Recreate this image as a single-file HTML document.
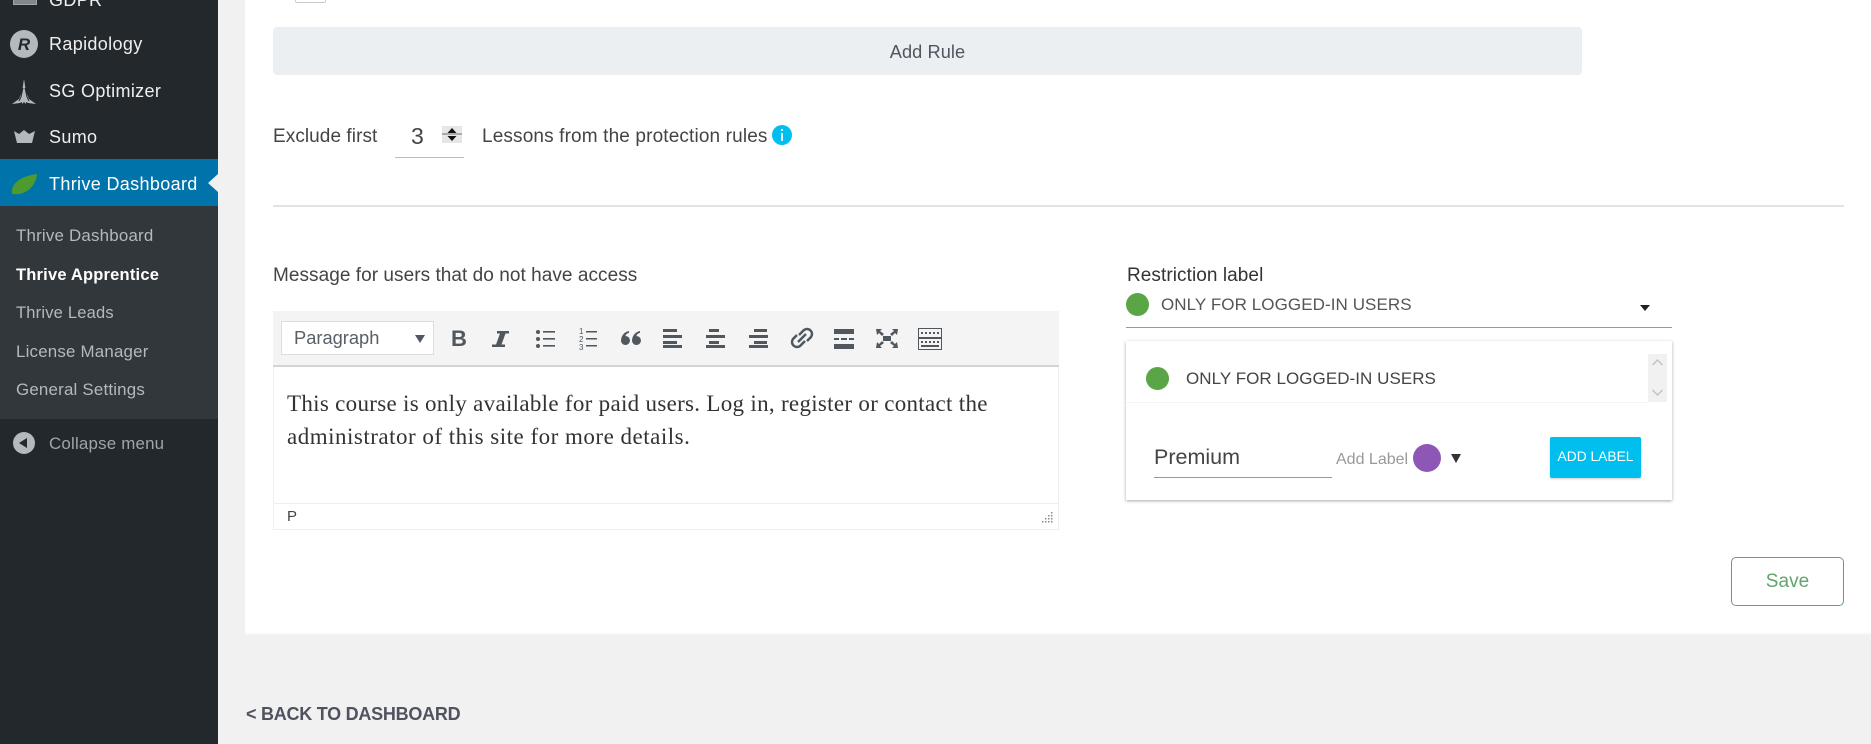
<!DOCTYPE html>
<html><head><meta charset="utf-8"><title>Thrive Apprentice</title>
<style>
html,body{margin:0;padding:0;width:1871px;height:744px;overflow:hidden;background:#f1f1f1}
body{position:relative;font-family:"Liberation Sans",sans-serif;color:#444}
.a,.t{position:absolute}
.t{white-space:nowrap;line-height:24px;height:24px}
.m{font-size:18px;color:#eee;left:49px;letter-spacing:.35px}
.s{font-size:16.9px;color:#b4b9be;left:16px;letter-spacing:.2px}
.c{font-size:19px;color:#444;letter-spacing:.07px}
.e{font-family:"Liberation Serif",serif;font-size:23px;color:#333;left:287px;letter-spacing:.3px}
.u{font-size:17px;letter-spacing:0}
svg{position:absolute;overflow:visible}
</style></head><body>
<div class="a" style="left:0;top:0;width:218px;height:744px;background:#23282d"></div>
<div class="a" style="left:0;top:159px;width:218px;height:47px;background:#0073aa"></div>
<div class="a" style="left:0;top:206px;width:218px;height:213px;background:#32373c"></div>
<div class="a" style="left:208px;top:174px;border:9px solid transparent;border-left:0;border-right:10px solid #f1f1f1"></div>

<div class="a" style="left:13px;top:-8px;width:22px;height:11px;border:1px solid #a0a5aa;background:#82878c"></div>
<div class="t m" style="top:-12px">GDPR</div>
<svg style="left:0;top:0" width="60" height="210" viewBox="0 0 60 210">
<circle cx="24" cy="44" r="14" fill="#b4b9be"/>
<text x="24" y="50" text-anchor="middle" font-family="Liberation Sans" font-style="italic" font-weight="bold" font-size="17" fill="#23282d">R</text>
<path d="M24 79l2 13 3 7 7 5-8-1-2-1 0 2-2-2-2 2 0-2-2 1-8 1 7-5 3-7z" fill="#b4b9be"/>
<path d="M23 88l-2 9-2 4M25 88l2 9 2 4" stroke="#23282d" stroke-width="1" fill="none"/>
<path d="M14 131l5 3 5-4 5 4 6-3-3 12H17z" fill="#b4b9be"/>
<path d="M12 194C10 183 22 176 37 174 36 186 26 196 12 194z" fill="#4f9a2f"/>
</svg>
<div class="t m" style="top:32px">Rapidology</div>
<div class="t m" style="top:79px">SG Optimizer</div>
<div class="t m" style="top:125px">Sumo</div>
<div class="t m" style="top:172px;color:#fff">Thrive Dashboard</div>
<div class="t s" style="top:224px">Thrive Dashboard</div>
<div class="t s" style="top:263px;color:#fff;font-weight:bold;font-size:16.500px">Thrive Apprentice</div>
<div class="t s" style="top:301px;font-size:16.500px">Thrive Leads</div>
<div class="t s" style="top:340px">License Manager</div>
<div class="t s" style="top:378px">General Settings</div>
<svg style="left:13px;top:432px" width="22" height="22"><circle cx="11" cy="11" r="11" fill="#b4b9be"/><path d="M6 11l8-5v10z" fill="#23282d"/></svg>
<div class="t s" style="top:432px;left:49px;color:#a0a5aa">Collapse menu</div>

<div class="a" style="left:245px;top:0;width:1626px;height:633px;background:#fff;border-bottom:2px solid #f6f6f6"></div>
<div class="a" style="left:295px;top:-6px;width:29px;height:7px;border:1px solid #ccc;border-radius:2px;background:#fff"></div>
<div class="a" style="left:273px;top:27px;width:1309px;height:48px;background:#ebeff2;border-radius:4px"></div>
<div class="t c" style="left:273px;width:1309px;text-align:center;top:40px;color:#50565f;font-size:18.200px">Add Rule</div>

<div class="t c" style="left:273px;top:125px">Exclude first</div>
<div class="t" style="left:411px;top:124px;font-size:23px;color:#444">3</div>
<div class="a" style="left:442px;top:126px;width:20px;height:17px;background:#e6e6e6"></div>
<svg style="left:442px;top:126px" width="20" height="17"><path d="M10 2l4.500 5h-9zM10 15l-4.500-5h9z" fill="#111"/><rect y="7" width="20" height="2" fill="#aaa"/></svg>
<div class="a" style="left:395px;top:157px;width:69px;height:1px;background:#bbb"></div>
<div class="t c" style="left:482px;top:125px;letter-spacing:.14px">Lessons from the protection rules</div>
<svg style="left:772px;top:125px" width="20" height="20"><circle cx="10" cy="10" r="10" fill="#00bfee"/><rect x="9" y="8" width="2" height="8" fill="#dff"/><rect x="9" y="4" width="2" height="2" fill="#dff"/></svg>
<div class="a" style="left:273px;top:205px;width:1571px;height:2px;background:#e2e2e2"></div>

<div class="t c" style="left:273px;top:264px;letter-spacing:.05px">Message for users that do not have access</div>
<div class="a" style="left:273px;top:311px;width:786px;height:219px;border:1px solid #eee;box-sizing:border-box;background:#fff"></div>
<div class="a" style="left:273px;top:311px;width:786px;height:54px;background:#f4f4f4;border-bottom:2px solid #d4d4d4"></div>
<div class="a" style="left:281px;top:321px;width:153px;height:34px;box-sizing:border-box;background:#fff;border:1px solid #ddd"></div>
<div class="t" style="left:294px;top:326px;font-size:18.300px;color:#595f66">Paragraph</div>
<svg style="left:0;top:0" width="1100" height="400" fill="#50575e">
<path d="M415 335h10l-5 8z"/>
<text x="451" y="346" font-family="Liberation Sans" font-weight="bold" font-size="22" fill="#50575e">B</text>
<path d="M497 331h12v2.500h-3.500l-4 11h3.500v2.500h-13v-2.500h4l4-11h-3z"/>
<circle cx="538" cy="332" r="2"/><circle cx="538" cy="339" r="2"/><circle cx="538" cy="346" r="2"/>
<path d="M543 331h12v1.600h-12zM543 338h12v1.600h-12zM543 345h12v1.600h-12z"/>
<text x="579" y="334" font-family="Liberation Sans" font-size="8" fill="#50575e">1</text><text x="579" y="342" font-family="Liberation Sans" font-size="8" fill="#50575e">2</text><text x="579" y="350" font-family="Liberation Sans" font-size="8" fill="#50575e">3</text>
<path d="M586 331h11v1.500h-11zM586 338h11v1.500h-11zM586 345h11v1.500h-11z"/>
<path d="M629 331c-5 1-8 5-8 10a4.500 4.500 0 1 0 4.500-5c0-1 1.500-3 3.500-3zM640 331c-5 1-8 5-8 10a4.500 4.500 0 1 0 4.500-5c0-1 1.500-3 3.500-3z"/>
<path d="M663 329h14v3h-14zM663 335h19v3h-19zM663 341h14v3h-14zM663 345h19v3h-19z"/>
<path d="M709 329h10v3h-10zM706 335h19v3h-19zM709 341h10v3h-10zM706 345h19v3h-19z"/>
<path d="M754 329h13v3h-13zM749 335h19v3h-19zM754 341h13v3h-13zM749 345h19v3h-19z"/>
<path d="M799 335l5-5a5 5 0 0 1 7 7l-4 4M805 341l-5 5a5 5 0 0 1-7-7l4-4M798 342l8-8" fill="none" stroke="#50575e" stroke-width="2.500"/>
<path d="M834 329h20v5h-20zM834 338h5v2h-5zM841 338h6v2h-6zM849 338h5v2h-5zM834 344h20v5h-20z"/>
<rect x="883" y="336" width="8" height="5"/>
<path d="M876 329h6l-2 2 4 3-2 2-3-3-2 2zM898 329h-6l2 2-4 3 2 2 3-3 2 2zM876 348h6l-2-2 4-3-2-2-3 3-2-2zM898 348h-6l2-2-4-3 2-2 3 3 2-2z"/>
<rect x="918.500" y="328.500" width="23" height="21" fill="none" stroke="#50575e"/>
<rect x="919" y="337" width="22" height="2"/>
<path d="M921 332h2v2h-2zM925 332h2v2h-2zM929 332h2v2h-2zM933 332h2v2h-2zM937 332h2v2h-2zM921 341h2v2h-2zM925 341h2v2h-2zM929 341h2v2h-2zM933 341h2v2h-2zM937 341h2v2h-2zM921 345h18v2h-18z"/>
</svg>
<div class="t e" style="top:392px">This course is only available for paid users. Log in, register or contact the</div>
<div class="t e" style="top:425px;letter-spacing:.5px">administrator of this site for more details.</div>
<div class="a" style="left:274px;top:503px;width:784px;height:1px;background:#eee"></div>
<div class="t" style="left:287px;top:505px;font-size:15px;color:#444">P</div>
<svg style="left:1040px;top:511px" width="14" height="14" fill="#888"><path d="M11 1h1.500v1.500h-1.500zM8 4h1.500v1.500H8zM11 4h1.500v1.500h-1.500zM5 7h1.500v1.500H5zM8 7h1.500v1.500H8zM11 7h1.500v1.500h-1.500zM2 10h1.500v1.500H2zM5 10h1.500v1.500H5zM8 10h1.500v1.500H8zM11 10h1.500v1.500h-1.500z"/></svg>

<div class="t c" style="left:1127px;top:264px;color:#333">Restriction label</div>
<div class="a" style="left:1126px;top:293px;width:23px;height:23px;border-radius:50%;background:#5aa545"></div>
<div class="t u" style="left:1161px;top:293px;color:#555;letter-spacing:.08px">ONLY FOR LOGGED-IN USERS</div>
<div class="a" style="left:1640px;top:305px;border:5px solid transparent;border-top:6px solid #222;border-bottom:0"></div>
<div class="a" style="left:1126px;top:327px;width:546px;height:1px;background:#999"></div>

<div class="a" style="left:1126px;top:341px;width:546px;height:159px;background:#fff;box-shadow:0 1px 3px rgba(0,0,0,.35)"></div>
<div class="a" style="left:1126px;top:402px;width:522px;height:1px;background:#f5f5f5"></div>
<div class="a" style="left:1648px;top:354px;width:19px;height:48px;background:#f1f1f1"></div>
<svg style="left:1648px;top:354px" width="19" height="48" fill="none" stroke="#c4c4c4" stroke-width="1.500"><path d="M4.500 11l5-5 5 5M4.500 36l5 5 5-5"/></svg>
<div class="a" style="left:1146px;top:367px;width:23px;height:23px;border-radius:50%;background:#5aa545"></div>
<div class="t u" style="left:1186px;top:367px;color:#444;letter-spacing:.05px">ONLY FOR LOGGED-IN USERS</div>
<div class="t" style="left:1154px;top:445px;font-size:21.500px;color:#444">Premium</div>
<div class="a" style="left:1154px;top:477px;width:178px;height:1px;background:#999"></div>
<div class="t" style="left:1336px;top:448px;font-size:16px;color:#999">Add Label</div>
<div class="a" style="left:1413px;top:444px;width:28px;height:28px;border-radius:50%;background:#8e57b5"></div>
<div class="a" style="left:1451px;top:454px;border:5px solid transparent;border-top:9px solid #333;border-bottom:0"></div>
<div class="a" style="left:1550px;top:437px;width:91px;height:41px;background:#00bfee;border-radius:2px;box-shadow:0 1px 2px rgba(0,0,0,.2)"></div>
<div class="t" style="left:1550px;width:91px;text-align:center;top:445px;font-size:13.800px;color:#fff">ADD LABEL</div>

<div class="a" style="left:1731px;top:557px;width:113px;height:49px;box-sizing:border-box;border:1px solid #5fa56c;border-radius:5px;background:#fff"></div>
<div class="t c" style="left:1731px;width:113px;text-align:center;top:570px;color:#5fa56c">Save</div>
<div class="t" style="left:246px;top:702px;font-size:18px;font-weight:bold;color:#50525f;letter-spacing:-.25px">&lt; BACK TO DASHBOARD</div>
</body></html>
